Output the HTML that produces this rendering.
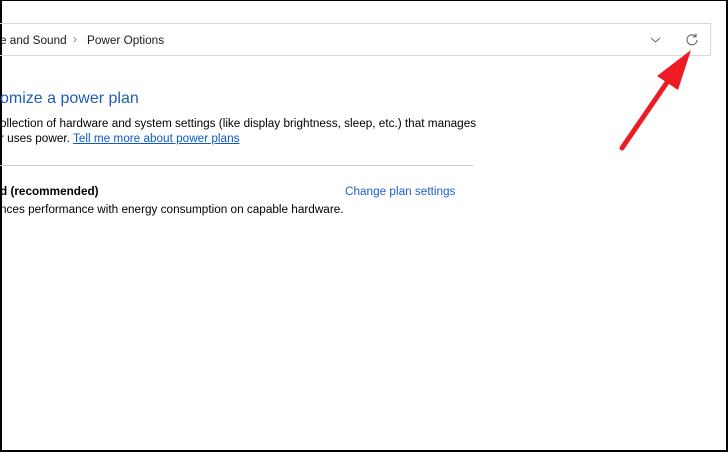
<!DOCTYPE html>
<html><head><style>
html,body{margin:0;padding:0}
body{width:728px;height:452px;position:relative;overflow:hidden;background:#fff;font-family:"Liberation Sans",sans-serif;color:#000}
.frame{position:absolute;left:0;top:0;width:724px;height:449px;border:2px solid #000;border-top-width:1px;box-sizing:content-box}
.addr{position:absolute;left:-2px;top:23px;width:713px;height:33px;border:1px solid #d9d9d9;box-sizing:border-box}
.t{position:absolute;white-space:nowrap;font-size:11.75px}
a{color:#0b5bc4}
</style></head><body>
<div class="frame"></div>
<div class="addr"></div>
<div class="t" style="left:0;top:34px;color:#1a1a1a">e and Sound</div>
<div class="t" style="left:73px;top:33px;color:#777">›</div>
<div class="t" style="left:87px;top:34px;color:#1a1a1a">Power Options</div>
<svg style="position:absolute;left:650px;top:36px" width="12" height="8"><path d="M1 2 L5.5 6 L10 2" fill="none" stroke="#666" stroke-width="1"/></svg>
<svg style="position:absolute;left:685px;top:32px" width="16" height="16"><path d="M12 8 A5 5 0 1 1 10.5 4.2" fill="none" stroke="#666" stroke-width="1.1"/><path d="M11 1.5 L11 4.8 L7.8 4.8" fill="none" stroke="#666" stroke-width="1.1"/></svg>
<div class="t" style="left:0;top:90px;font-size:16px;color:#1f5bb5">omize a power plan</div>
<div class="t" style="left:0;top:117px">ollection of hardware and system settings (like display brightness, sleep, etc.) that manages</div>
<div class="t" style="left:0;top:132px">r uses power. <a href="#x" style="color:#0b5bc4">Tell me more about power plans</a></div>
<div style="position:absolute;left:0;top:165px;width:473px;height:1px;background:#ccc"></div>
<div class="t" style="left:0;top:185px;font-weight:bold">d (recommended)</div>
<div class="t" style="left:345px;top:185px;color:#1c5fc9">Change plan settings</div>
<div class="t" style="left:0;top:203px">nces performance with energy consumption on capable hardware.</div>
<svg style="position:absolute;left:0;top:0" width="728" height="452">
<line x1="622" y1="148" x2="670" y2="78" stroke="#ed1c24" stroke-width="5" stroke-linecap="round"/>
<polygon points="691,50 657,76 678,90" fill="#ed1c24"/>
</svg>
</body></html>
